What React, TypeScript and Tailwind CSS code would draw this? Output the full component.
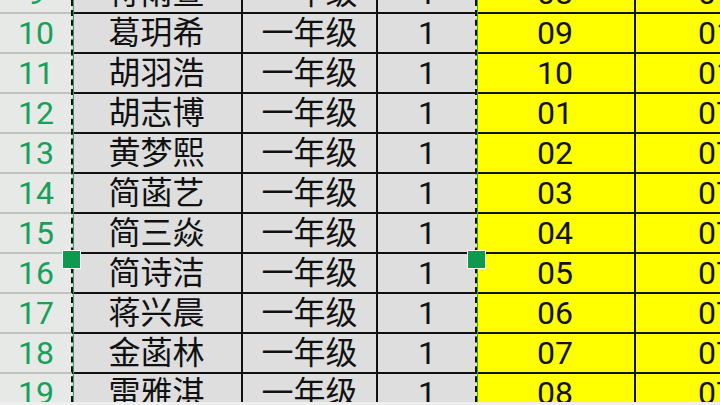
const rows = [
  { n: 9, name: '符雨萱', code: '08', next: '07' },
  { n: 10, name: '葛玥希', code: '09', next: '01' },
  { n: 11, name: '胡羽浩', code: '10', next: '01' },
  { n: 12, name: '胡志博', code: '01', next: '07' },
  { n: 13, name: '黄梦熙', code: '02', next: '07' },
  { n: 14, name: '简菡艺', code: '03', next: '07' },
  { n: 15, name: '简三焱', code: '04', next: '07' },
  { n: 16, name: '简诗洁', code: '05', next: '07' },
  { n: 17, name: '蒋兴晨', code: '06', next: '07' },
  { n: 18, name: '金菡林', code: '07', next: '07' },
  { n: 19, name: '雷雅淇', code: '08', next: '07' },
];

function SelectionLine({ left }: { left: string }) {
  return (
    <div className={`absolute top-0 bottom-0 ${left} flex`}>
      <div className="w-[2px] h-full border-l-2 border-dashed border-[#111]" />
      <div className="w-px h-full bg-[#22a35f]" />
    </div>
  );
}

function Handle({ left }: { left: string }) {
  return <div className={`absolute top-[250px] ${left} w-[19px] h-[19px] bg-[#0d9a4f] border border-white`} />;
}

export default function App() {
  return (
    <div
      className="w-[720px] h-[405px] overflow-hidden flex flex-col bg-[#dedede]"
      style={{ fontFamily: "Roboto, 'Noto Sans CJK SC', sans-serif" }}
    >
      <div className="relative h-[402px] overflow-hidden">
        <div className="-mt-[26px] flex flex-col">
          {rows.map((r) => (
            <div key={r.n} className="flex h-[40px] shrink-0 text-[32px] leading-none">
              {/* row header */}
              <div className="w-[72px] shrink-0 bg-[#e6e9e6] border-b-2 border-[#bfc3bf] flex items-center justify-center text-[#17a05a]">
                {r.n}
              </div>
              <div className="w-[171px] shrink-0 border-b-2 border-r-2 border-[#111] flex items-center justify-center text-[#111]">
                {r.name}
              </div>
              <div className="w-[135px] shrink-0 border-b-2 border-r-2 border-[#111] flex items-center justify-center text-[#111]">
                一年级
              </div>
              <div className="w-[98px] shrink-0 border-b-2 border-[#111] flex items-center justify-center text-[#111]">
                1
              </div>
              <div className="w-[160px] shrink-0 bg-[#ffff00] border-b-2 border-r-2 border-[#111] flex items-center justify-center text-[#111]">
                {r.code}
              </div>
              <div className="w-[160px] shrink-0 bg-[#ffff00] border-b-2 border-[#111] flex items-center justify-center text-[#111]">
                {r.next}
              </div>
            </div>
          ))}
        </div>
        <SelectionLine left="left-[71px]" />
        <SelectionLine left="left-[475px]" />
        <Handle left="left-[62px]" />
        <Handle left="left-[467px]" />
      </div>
      <div className="h-[3px] bg-[#eeeeee]" />
    </div>
  );
}
